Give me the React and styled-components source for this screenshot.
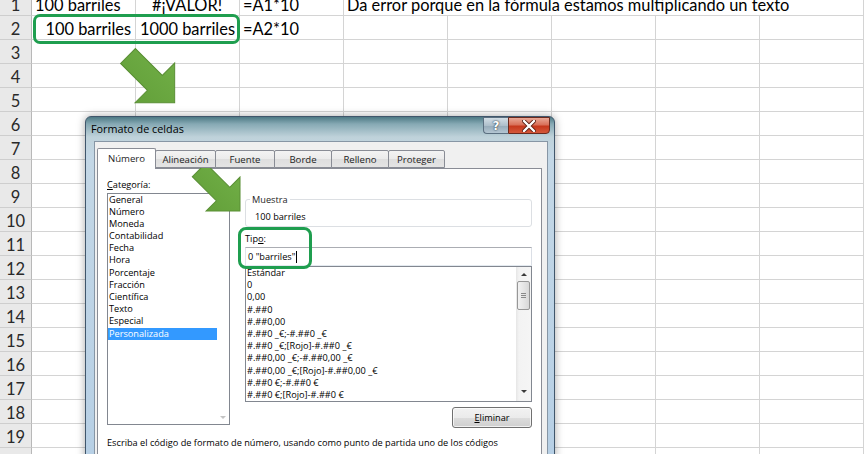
import React from 'react';
import styled, { createGlobalStyle } from 'styled-components';

const GlobalStyle = createGlobalStyle`
  html, body {
    margin: 0;
    padding: 0;
    background: #ffffff;
  }
  body {
    width: 864px;
    height: 454px;
    overflow: hidden;
  }
`;

const rows = [
  { n: 1, cells: [
    { t: '100 barriles' },
    { t: '#¡VALOR!', align: 'center' },
    { t: '=A1*10' },
    { t: 'Da error porque en la fórmula estamos multiplicando un texto', span: 5 },
  ] },
  { n: 2, cells: [
    { t: '100 barriles', align: 'right' },
    { t: '1000 barriles', align: 'right' },
    { t: '=A2*10' },
    {}, {}, {}, {}, {},
  ] },
];

const categories = [
  'General', 'Número', 'Moneda', 'Contabilidad', 'Fecha', 'Hora', 'Porcentaje',
  'Fracción', 'Científica', 'Texto', 'Especial', 'Personalizada',
];

const formats = [
  'Estándar', '0', '0,00', '#.##0', '#.##0,00', '#.##0 _€;-#.##0 _€',
  '#.##0 _€;[Rojo]-#.##0 _€', '#.##0,00 _€;-#.##0,00 _€',
  '#.##0,00 _€;[Rojo]-#.##0,00 _€', '#.##0 €;-#.##0 €', '#.##0 €;[Rojo]-#.##0 €',
];

const tabs = [
  { label: 'Número', width: 59, active: true },
  { label: 'Alineación', width: 61 },
  { label: 'Fuente', width: 60 },
  { label: 'Borde', width: 58 },
  { label: 'Relleno', width: 58 },
  { label: 'Proteger', width: 57 },
];

export default function App() {
  const sheetRows = [];
  for (let n = 1; n <= 20; n++) {
    const r = rows.find((x) => x.n === n);
    const cells = r ? r.cells : Array.from({ length: 8 }, () => ({}));
    sheetRows.push(
      <React.Fragment key={n}>
        <RowHead>{n}</RowHead>
        {cells.map((c, i) => (
          <Cell key={i} $align={c.align} $span={c.span}>{c.t}</Cell>
        ))}
      </React.Fragment>
    );
  }

  return (
    <Stage>
      <GlobalStyle />
      <Sheet>{sheetRows}</Sheet>

      <Ring $left={33} $top={14} $width={207} $height={30} $radius={7} />
      <GreenArrow id="a1" left={108} top={36} w={10.5} shaft={38} head={28} headW={28} />

      <Dialog>
        <TitleBar>
          <Title>Formato de celdas</Title>
          <Captions>
            <HelpButton>?</HelpButton>
            <CloseButton>
              <svg width="14" height="12" viewBox="0 0 14 12">
                <path d="M2 1 L12 11 M12 1 L2 11" stroke="#5a2015" strokeWidth="4" strokeLinecap="round" />
                <path d="M2 1 L12 11 M12 1 L2 11" stroke="#ffffff" strokeWidth="2.4" strokeLinecap="round" />
              </svg>
            </CloseButton>
          </Captions>
        </TitleBar>
        <Frame>
          <Client>
            <TabStrip>
              {tabs.map((t) => (
                <Tab key={t.label} $active={t.active} $width={t.width}>{t.label}</Tab>
              ))}
            </TabStrip>
            <Panel>
              <Columns>
                <LeftCol>
                  <Label><u>C</u>ategoría:</Label>
                  <CategoryList>
                    <Items>
                      {categories.map((c) => (
                        <Item key={c} $selected={c === 'Personalizada'}>{c}</Item>
                      ))}
                    </Items>
                    <BlankScroll>
                      <Tri $up $faint />
                      <Tri $faint />
                    </BlankScroll>
                  </CategoryList>
                </LeftCol>
                <RightCol>
                  <GroupBox>
                    <Legend>Muestra</Legend>
                    <Sample>100 barriles</Sample>
                  </GroupBox>
                  <Label>Tip<u>o</u>:</Label>
                  <TextBox>0 "barriles"<Caret /></TextBox>
                  <FormatList>
                    <Items>
                      {formats.map((f) => (
                        <Item key={f}>{f}</Item>
                      ))}
                    </Items>
                    <ScrollBar>
                      <Tri $up />
                      <Thumb>
                        <Grip />
                      </Thumb>
                      <ScrollSpacer />
                      <Tri />
                    </ScrollBar>
                  </FormatList>
                  <ButtonRow>
                    <Button><u>E</u>liminar</Button>
                  </ButtonRow>
                </RightCol>
              </Columns>
              <Description>
                Escriba el código de formato de número, usando como punto de partida uno de los códigos
              </Description>
            </Panel>
          </Client>
        </Frame>
      </Dialog>

      <GreenArrow id="a2" left={179} top={150} w={9.5} shaft={34} head={24} headW={24} />
      <Ring $left={238} $top={227} $width={74} $height={42} $radius={8} />
    </Stage>
  );
}

function GreenArrow({ id, left, top, w, shaft, head, headW }) {
  const pts = [
    [0, -w], [shaft, -w], [shaft, -headW], [shaft + head, 0],
    [shaft, headW], [shaft, w], [0, w],
  ].map((p) => p.join(',')).join(' ');
  return (
    <ArrowSvg $left={left} $top={top} width="90" height="90" viewBox="0 0 90 90">
      <defs>
        <linearGradient id={id} x1="0" y1="-1" x2="0" y2="1" gradientUnits="objectBoundingBox">
          <stop offset="0" stopColor="#7dbb51" />
          <stop offset="1" stopColor="#63a03a" />
        </linearGradient>
      </defs>
      <g transform="translate(20 20) rotate(45)">
        <polygon points={pts} fill={`url(#${id})`} stroke="#5a8f35" strokeWidth="1" />
      </g>
    </ArrowSvg>
  );
}

const Stage = styled.div`
  position: relative;
  width: 864px;
  height: 454px;
  overflow: hidden;
  background: #ffffff;
  font-family: 'Lato', 'Liberation Sans', sans-serif;
`;

const Sheet = styled.div`
  display: grid;
  grid-template-columns: 32px repeat(8, 104px);
  grid-auto-rows: 24px;
  margin-top: -8px;
`;

const RowHead = styled.div`
  box-sizing: border-box;
  display: flex;
  align-items: center;
  justify-content: center;
  padding-top: 2px;
  background: #e9e9e9;
  border-right: 1px solid #b8b8b8;
  border-bottom: 1px solid #cecece;
  font-size: 16.5px;
  color: #2a2a2a;
`;

const Cell = styled.div`
  box-sizing: border-box;
  grid-column: span ${(p) => p.$span || 1};
  display: flex;
  align-items: center;
  justify-content: ${(p) =>
    p.$align === 'right' ? 'flex-end' : p.$align === 'center' ? 'center' : 'flex-start'};
  padding: 2px 4px 0 3px;
  border-right: 1px solid #d4d4d4;
  border-bottom: 1px solid #d4d4d4;
  font-size: 16.4px;
  color: #000000;
  white-space: nowrap;
`;

const Ring = styled.div`
  position: absolute;
  left: ${(p) => p.$left}px;
  top: ${(p) => p.$top}px;
  width: ${(p) => p.$width}px;
  height: ${(p) => p.$height}px;
  box-sizing: border-box;
  border: 3px solid #1f9e4f;
  border-radius: ${(p) => p.$radius}px;
`;

const ArrowSvg = styled.svg`
  position: absolute;
  left: ${(p) => p.$left}px;
  top: ${(p) => p.$top}px;
  overflow: visible;
`;

const Dialog = styled.div`
  position: absolute;
  left: 85px;
  top: 116px;
  width: 470px;
  height: 360px;
  box-sizing: border-box;
  display: flex;
  flex-direction: column;
  border: 1px solid #40566b;
  border-radius: 6px 6px 0 0;
  background: linear-gradient(
    180deg,
    #4d7984 0px,
    #86a9b4 7px,
    #bfd2da 20px,
    #c3d7e6 40px,
    #b6cfe5 100%
  );
  box-shadow: 0 0 8px rgba(0, 0, 0, 0.35);
  font-family: 'Open Sans', 'Noto Sans', sans-serif;
  font-size: 9.2px;
  color: #000000;
`;

const TitleBar = styled.div`
  height: 24px;
  display: flex;
  align-items: flex-start;
  padding-left: 5px;
`;

const Title = styled.div`
  align-self: center;
  font-size: 10.8px;
  color: #000000;
  padding-bottom: 1px;
`;

const Captions = styled.div`
  margin-left: auto;
  margin-right: 4px;
  display: flex;
`;

const HelpButton = styled.div`
  box-sizing: border-box;
  width: 25px;
  height: 17px;
  display: flex;
  align-items: center;
  justify-content: center;
  border: 1px solid #5b6f80;
  border-right: none;
  border-radius: 0 0 0 4px;
  background: linear-gradient(180deg, #d3dee5 0%, #aebfcb 50%, #95aab8 51%, #b4c6d2 100%);
  font-family: 'DejaVu Sans', sans-serif;
  font-weight: bold;
  font-size: 12px;
  color: #ffffff;
  text-shadow: 0 0 2px #2d3f4d, 0 0 1px #2d3f4d;
`;

const CloseButton = styled.div`
  box-sizing: border-box;
  width: 42px;
  height: 17px;
  display: flex;
  align-items: center;
  justify-content: center;
  border: 1px solid #6a2a1e;
  border-radius: 0 0 4px 0;
  background: linear-gradient(180deg, #e9a795 0%, #d9715a 45%, #c6381d 55%, #d4583a 100%);
`;

const Frame = styled.div`
  flex: 1;
  display: flex;
  padding: 0 6px 0 8px;
`;

const Client = styled.div`
  flex: 1;
  display: flex;
  flex-direction: column;
  box-sizing: border-box;
  padding: 6px 5px 0 2px;
  background: #f0f0f0;
  border: 1px solid #8796a5;
  border-bottom: none;
`;

const TabStrip = styled.div`
  display: flex;
  align-items: flex-end;
  height: 20px;
  position: relative;
  z-index: 1;
`;

const Tab = styled.div`
  box-sizing: border-box;
  width: ${(p) => p.$width}px;
  height: ${(p) => (p.$active ? 21 : 18)}px;
  margin-bottom: ${(p) => (p.$active ? -1 : 0)}px;
  margin-left: ${(p) => (p.$active ? 0 : -1)}px;
  display: flex;
  align-items: center;
  justify-content: center;
  padding-bottom: ${(p) => (p.$active ? 2 : 0)}px;
  border: 1px solid #898c95;
  border-bottom: ${(p) => (p.$active ? 'none' : '1px solid #898c95')};
  border-radius: 2px 2px 0 0;
  background: ${(p) =>
    p.$active ? '#ffffff' : 'linear-gradient(180deg, #f3f3f3 0%, #ebebeb 50%, #dedede 51%, #e4e4e4 100%)'};
  font-size: 9.6px;
  color: #1e1e1e;
`;

const Panel = styled.div`
  flex: 1;
  box-sizing: border-box;
  padding: 9px 9px 0 9px;
  background: #ffffff;
  border: 1px solid #898c95;
  border-bottom: none;
`;

const Columns = styled.div`
  display: flex;
  gap: 15px;
`;

const LeftCol = styled.div`
  width: 123px;
  display: flex;
  flex-direction: column;
`;

const RightCol = styled.div`
  flex: 1;
  display: flex;
  flex-direction: column;
`;

const Label = styled.div`
  height: 13px;
  line-height: 13px;
  margin-bottom: 1.5px;
  color: #000000;

  u {
    text-decoration-thickness: 1px;
    text-underline-offset: 1px;
  }
`;

const CategoryList = styled.div`
  box-sizing: border-box;
  height: 232px;
  display: flex;
  border: 1px solid #828790;
  background: #ffffff;
`;

const Items = styled.div`
  flex: 1;
  display: flex;
  flex-direction: column;
  overflow: hidden;
`;

const Item = styled.div`
  height: 12.2px;
  line-height: 12.2px;
  padding-left: 1px;
  white-space: nowrap;
  background: ${(p) => (p.$selected ? '#3399ff' : 'transparent')};
  color: ${(p) => (p.$selected ? '#ffffff' : '#000000')};
`;

const BlankScroll = styled.div`
  width: 12px;
  display: flex;
  flex-direction: column;
  justify-content: space-between;
  align-items: center;
  padding: 5px 0;
`;

const Tri = styled.div`
  width: 0;
  height: 0;
  border-left: 3px solid transparent;
  border-right: 3px solid transparent;
  ${(p) =>
    p.$up
      ? `border-bottom: 3px solid ${p.$faint ? '#c4c4c4' : '#3a3a3a'};`
      : `border-top: 3px solid ${p.$faint ? '#c4c4c4' : '#3a3a3a'};`}
`;

const GroupBox = styled.fieldset`
  margin: 15px 0 5px 0;
  padding: 0 8px 3px 8px;
  border: 1px solid #dcdfe3;
  border-radius: 3px;
  min-width: 0;
`;

const Legend = styled.legend`
  margin-left: -4px;
  padding: 0 2px;
  line-height: 13px;
  color: #1e1e1e;
`;

const Sample = styled.div`
  margin-top: 4px;
  line-height: 13px;
  padding-left: 1px;
`;

const TextBox = styled.div`
  box-sizing: border-box;
  height: 19px;
  margin-top: 0.5px;
  display: flex;
  align-items: center;
  padding-left: 2px;
  border: 1px solid #abadb3;
  border-left-color: #e2e3ea;
  border-right-color: #dbdfe6;
  border-bottom-color: #e3e9ef;
  background: #ffffff;
  white-space: pre;
`;

const Caret = styled.span`
  width: 1px;
  height: 12px;
  margin-left: 1px;
  background: #000000;
`;

const FormatList = styled.div`
  box-sizing: border-box;
  height: 136px;
  display: flex;
  border: 1px solid #828790;
  background: #ffffff;
`;

const ScrollBar = styled.div`
  width: 15px;
  display: flex;
  flex-direction: column;
  align-items: center;
  padding: 6px 0 8px 0;
  box-sizing: border-box;
  background: linear-gradient(90deg, #e6e6e6 0, #f3f3f3 3px, #f5f5f5 100%);
`;

const Thumb = styled.div`
  box-sizing: border-box;
  width: 13px;
  height: 29px;
  margin-top: 5px;
  display: flex;
  align-items: center;
  justify-content: center;
  border: 1px solid #979797;
  border-radius: 2px;
  background: linear-gradient(90deg, #f2f2f2 0%, #e6e6e6 50%, #d8d8d8 100%);
`;

const Grip = styled.div`
  width: 5px;
  height: 5px;
  background: repeating-linear-gradient(180deg, #8a8a8a 0, #8a8a8a 1px, transparent 1px, transparent 2px);
`;

const ScrollSpacer = styled.div`
  flex: 1;
`;

const ButtonRow = styled.div`
  display: flex;
  justify-content: flex-end;
  margin-top: 5px;
`;

const Button = styled.div`
  box-sizing: border-box;
  width: 80px;
  height: 21px;
  display: flex;
  align-items: center;
  justify-content: center;
  border: 1px solid #707070;
  border-radius: 3px;
  background: linear-gradient(180deg, #f2f2f2 0%, #ebebeb 50%, #dddddd 51%, #cfcfcf 100%);
  box-shadow: inset 0 0 0 1px rgba(255, 255, 255, 0.7);
  color: #000000;
`;

const Description = styled.div`
  margin-top: 8px;
  line-height: 13px;
  white-space: nowrap;
  color: #000000;
`;
